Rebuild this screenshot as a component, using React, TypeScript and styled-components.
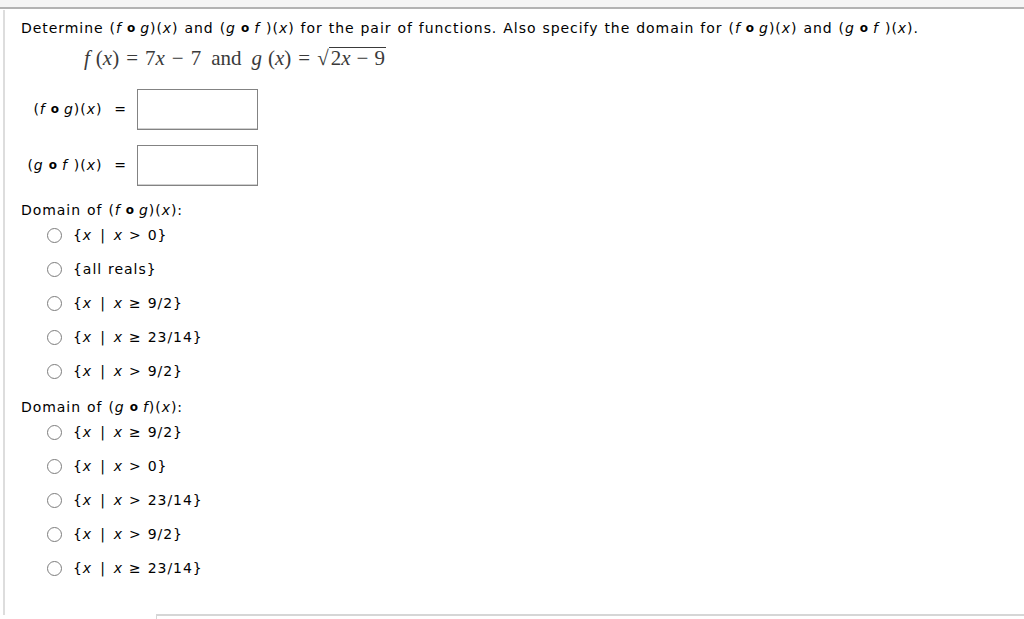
import styled, { createGlobalStyle } from 'styled-components';

const GlobalStyle = createGlobalStyle`
	html, body {
		margin: 0;
		padding: 0;
		background: #ffffff;
	}
	body {
		font-family: "DejaVu Sans", Verdana, sans-serif;
		color: #000;
	}
`;

const TopBar = styled.div`
	height: 7px;
	background: #f5f5f5;
	border-bottom: 2px solid #b3b3b3;
`;

const Frame = styled.div`
	margin: 1px 0 0 3px;
	border-left: 2px solid #dddddd;
	padding: 8px 0 30px 16px;
	font-size: 14px;
	line-height: 20px;
	letter-spacing: 0.95px;
	word-spacing: 0.6px;
`;

const Prompt = styled.p`
	margin: 0;
	white-space: nowrap;
`;

const Formula = styled.div`
	margin: 7px 0 0 63px;
	font-family: "Liberation Serif", "DejaVu Serif", serif;
	font-size: 21px;
	line-height: 24px;
	letter-spacing: 0;
	word-spacing: 0;
	color: #3a3a3a;
	white-space: nowrap;
`;

const Op = styled.span<{ $space?: number }>`
	margin: 0 ${(p) => p.$space ?? 6}px;
`;

const Fn = styled.i`
	margin-right: 6px;
`;

const Root = styled.span`
	display: inline-block;
	border-top: 1px solid #3a3a3a;
	line-height: 21px;
	padding: 0 1px 0 2px;
`;

const Answers = styled.div`
	margin-top: 19px;
	display: grid;
	grid-template-columns: 106px 121px;
	column-gap: 10px;
	row-gap: 15px;
	align-items: center;
`;

const Label = styled.span`
	justify-self: end;
	white-space: nowrap;
`;

const AnswerBox = styled.div`
	height: 39px;
	border: 1px solid #838383;
	box-shadow: inset 0 -1px 0 #d0d0d0;
	background: #fff;
`;

const Group = styled.div<{ $gap?: number }>`
	margin-top: ${(p) => p.$gap ?? 0}px;
`;

const Heading = styled.div``;

const Options = styled.div`
	margin-top: -3px;
`;

const Option = styled.label`
	display: flex;
	align-items: center;
	height: 34px;
	padding-left: 26px;
	gap: 11px;
	cursor: pointer;
`;

const Radio = styled.span`
	width: 13px;
	height: 13px;
	border-radius: 50%;
	border: 1px solid #7d7d7d;
	background: #fff;
`;

const Pipe = styled.span`
	margin: 0 2px;
`;

const BottomEdge = styled.div`
	margin: -1px 0 0 156px;
	height: 3px;
	border-top: 2px solid #d6d6d6;
	border-left: 1px solid #d6d6d6;
`;

const Ring = styled.span`
	font-weight: bold;
	font-size: 12px;
	letter-spacing: 0;
	margin: 0 5px;
	position: relative;
	top: -1px;
`;

function Comp({ a, b, gap }: { a: string; b: string; gap?: boolean }) {
	return (
		<>
			(<i>{a}</i>
			<Ring>o</Ring>
			<i>{b}</i>
			{gap ? ' ' : ''})(<i>x</i>)
		</>
	);
}

const fog = ['{x | x > 0}', '{all reals}', '{x | x ≥ 9/2}', '{x | x ≥ 23/14}', '{x | x > 9/2}'];
const gof = ['{x | x ≥ 9/2}', '{x | x > 0}', '{x | x > 23/14}', '{x | x > 9/2}', '{x | x ≥ 23/14}'];

function SetText({ text }: { text: string }) {
	if (text.indexOf('x') < 0) return <span>{text}</span>;
	const rest = text.slice(text.indexOf('|') + 4);
	return (
		<span>
			{'{'}
			<i>x</i> <Pipe>|</Pipe> <i>x</i>
			{' ' + rest}
		</span>
	);
}

function OptionList({ items }: { items: string[] }) {
	return (
		<Options>
			{items.map((t) => (
				<Option key={t}>
					<Radio />
					<SetText text={t} />
				</Option>
			))}
		</Options>
	);
}

export default function App() {
	return (
		<>
			<GlobalStyle />
			<TopBar />
			<Frame>
				<Prompt>
					Determine <Comp a="f" b="g" /> and <Comp a="g" b="f" gap /> for the pair of functions.
					Also specify the domain for <Comp a="f" b="g" /> and <Comp a="g" b="f" gap />.
				</Prompt>
				<Formula>
					<Fn>f</Fn>(<i>x</i>)<Op $space={7}>=</Op>7<i>x</i>
					<Op $space={7}>−</Op>7<Op $space={10}>and</Op>
					<Fn>g</Fn>(<i>x</i>)<Op $space={7}>=</Op>√
					<Root>
						2<i>x</i>
						<Op $space={6}>−</Op>9
					</Root>
				</Formula>
				<Answers>
					<Label>
						<Comp a="f" b="g" />&nbsp; =
					</Label>
					<AnswerBox />
					<Label>
						<Comp a="g" b="f" gap />&nbsp; =
					</Label>
					<AnswerBox />
				</Answers>
				<Group $gap={14}>
					<Heading>
						Domain of <Comp a="f" b="g" />:
					</Heading>
					<OptionList items={fog} />
				</Group>
				<Group $gap={9}>
					<Heading>
						Domain of <Comp a="g" b="f" />:
					</Heading>
					<OptionList items={gof} />
				</Group>
			</Frame>
			<BottomEdge />
		</>
	);
}
